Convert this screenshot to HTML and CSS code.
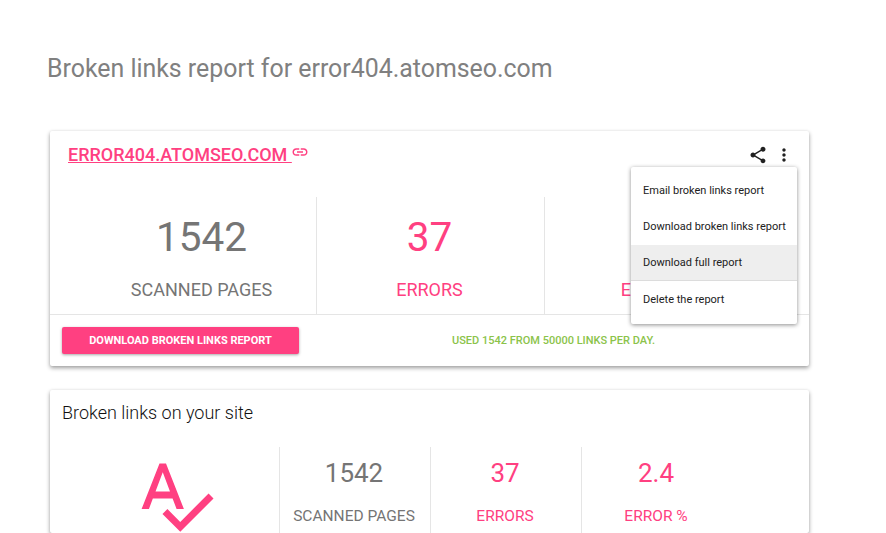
FILE: index.html
```html
<!DOCTYPE html>
<html lang="en">
<head>
    <meta charset="UTF-8">
    <meta name="viewport" content="width=device-width, initial-scale=1.0">
    <title>Broken links report</title>
    <link rel="stylesheet" href="styles.css">
</head>
<body>
    <h1 class="page-title">Broken links report for error404.atomseo.com</h1>

    <div class="card report-card">
        <div class="report-head">
            <a class="site-link" href="#">ERROR404.ATOMSEO.COM </a>
            <svg class="link-icon" viewBox="0 0 24 24"><path d="M3.9 12c0-1.71 1.39-3.1 3.1-3.1h4V7H7c-2.76 0-5 2.24-5 5s2.24 5 5 5h4v-1.9H7c-1.71 0-3.1-1.39-3.1-3.1zM8 13h8v-2H8v2zm9-6h-4v1.9h4c1.71 0 3.1 1.39 3.1 3.1s-1.39 3.1-3.1 3.1h-4V17h4c2.76 0 5-2.24 5-5s-2.24-5-5-5z"/></svg>
            <div class="head-actions">
                <svg class="action-icon" viewBox="0 0 24 24"><path d="M18 16.08c-.76 0-1.44.3-1.96.77L8.91 12.7c.05-.23.09-.46.09-.7s-.04-.47-.09-.7l7.05-4.11c.54.5 1.25.81 2.04.81 1.66 0 3-1.34 3-3s-1.34-3-3-3-3 1.34-3 3c0 .24.04.47.09.7L8.04 9.81C7.5 9.31 6.79 9 6 9c-1.66 0-3 1.34-3 3s1.34 3 3 3c.79 0 1.5-.31 2.04-.81l7.12 4.16c-.05.21-.08.43-.08.65 0 1.61 1.31 2.92 2.92 2.92s2.92-1.31 2.92-2.92-1.31-2.92-2.92-2.92z"/></svg>
                <svg class="action-icon" viewBox="0 0 24 24"><path d="M12 8c1.1 0 2-.9 2-2s-.9-2-2-2-2 .9-2 2 .9 2 2 2zm0 2c-1.1 0-2 .9-2 2s.9 2 2 2 2-.9 2-2-.9-2-2-2zm0 6c-1.1 0-2 .9-2 2s.9 2 2 2 2-.9 2-2-.9-2-2-2z"/></svg>
            </div>
        </div>

        <div class="big-stats">
            <div class="big-stat">
                <div class="big-num">1542</div>
                <div class="big-label">SCANNED PAGES</div>
            </div>
            <div class="big-stat pink">
                <div class="big-num">37</div>
                <div class="big-label">ERRORS</div>
            </div>
            <div class="big-stat pink">
                <div class="big-num">2.4</div>
                <div class="big-label">ERROR %</div>
            </div>
        </div>

        <div class="report-foot">
            <button class="download-btn" type="button">DOWNLOAD BROKEN LINKS REPORT</button>
            <div class="usage">USED 1542 FROM 50000 LINKS PER DAY.</div>
        </div>

        <ul class="menu">
            <li>Email broken links report</li>
            <li>Download broken links report</li>
            <li class="active">Download full report</li>
            <li>Delete the report</li>
        </ul>
    </div>

    <div class="card links-card">
        <h2 class="card-title">Broken links on your site</h2>
        <div class="small-stats">
            <div class="spell-box">
                <svg class="spell-icon" viewBox="0 0 24 24"><path d="M12.45 16h2.09L9.43 3H7.57L2.46 16h2.09l1.12-3h5.64l1.14 3zm-6.02-5L8.5 5.48 10.57 11H6.43zm15.16.59l-8.09 8.09L9.83 16l-1.41 1.41 5.09 5.09L23 13l-1.41-1.41z"/></svg>
            </div>
            <div class="small-stat">
                <div class="small-num">1542</div>
                <div class="small-label">SCANNED PAGES</div>
            </div>
            <div class="small-stat pink">
                <div class="small-num">37</div>
                <div class="small-label">ERRORS</div>
            </div>
            <div class="small-stat pink">
                <div class="small-num">2.4</div>
                <div class="small-label">ERROR %</div>
            </div>
        </div>
    </div>
</body>
</html>
```

FILE: styles.css
```css
html, body {
    height: 533px;
    overflow: hidden;
}
body {
    margin: 0;
    padding: 0 77px 0 50px;
    font-family: Roboto, Arial, sans-serif;
    background-color: white;
}
.page-title {
    margin: 0 0 0 -3px;
    padding-top: 53px;
    height: 78px;
    font-size: 24.9px;
    line-height: 32px;
    font-weight: 400;
    color: #808080;
}
.card {
    background-color: white;
    border-radius: 2px;
    box-shadow: 0 2px 4px rgba(0, 0, 0, 0.38), 0 0 3px rgba(0, 0, 0, 0.05);
}
.report-card {
    position: relative;
    height: 235px;
}
.report-head {
    display: flex;
    align-items: flex-start;
    height: 66px;
    padding: 12px 15px 0 18px;
    box-sizing: border-box;
}
.site-link {
    font-size: 18px;
    line-height: 24px;
    font-weight: 500;
    color: #ff4081;
    white-space: pre;
}
.link-icon {
    width: 18px;
    height: 18px;
    margin-left: -0.5px;
    fill: #ff4081;
}
.head-actions {
    display: flex;
    gap: 6px;
    margin: 2px 0 0 auto;
}
.action-icon {
    width: 20px;
    height: 20px;
    fill: #212121;
}
.big-stats {
    display: flex;
    height: 117px;
    padding-left: 39px;
    border-bottom: 1px solid #e5e5e5;
}
.big-stat {
    width: 228px;
    box-sizing: border-box;
    padding-right: 2px;
    border-right: 1px solid #e5e5e5;
    text-align: center;
    color: #757575;
}
.big-num {
    padding-top: 12px;
    font-size: 40.5px;
    line-height: 56px;
}
.big-label {
    margin-top: 13px;
    font-size: 18px;
    line-height: 24px;
}
.report-foot {
    display: flex;
    align-items: center;
    height: 51px;
    padding-left: 12px;
}
.download-btn {
    width: 237px;
    height: 27px;
    border: none;
    border-radius: 2px;
    background-color: #ff4081;
    color: white;
    font-family: inherit;
    font-size: 11px;
    font-weight: 700;
    box-shadow: 0 1px 3px rgba(0, 0, 0, 0.35);
}
.usage {
    margin-left: 153px;
    font-size: 11px;
    font-weight: 500;
    color: #8bc34a;
}
.menu {
    position: absolute;
    top: 36px;
    left: 581px;
    width: 166px;
    margin: 0;
    padding: 6px 0 7px;
    list-style: none;
    background-color: white;
    border-radius: 2px;
    box-shadow: 0 1px 4px rgba(0, 0, 0, 0.45);
    font-size: 11px;
    color: #212121;
}
.menu li {
    height: 36px;
    padding-left: 12px;
    line-height: 36px;
    white-space: nowrap;
}
.menu .active {
    box-sizing: border-box;
    background-color: #eeeeee;
    border-bottom: 1px solid #dcdcdc;
}
.menu .active + li {
    line-height: 38px;
}
.links-card {
    margin-top: 24px;
    height: 143px;
    overflow: hidden;
}
.card-title {
    margin: 0;
    padding: 11px 12px 0;
    height: 46px;
    box-sizing: border-box;
    font-size: 18px;
    line-height: 24px;
    font-weight: 300;
    color: #111111;
}
.small-stats {
    display: flex;
    padding-top: 11px;
    height: 86px;
}
.spell-box {
    width: 230px;
    height: 100px;
    border-right: 1px solid #e5e5e5;
    box-sizing: border-box;
    padding: 6px 0 0 83px;
}
.spell-icon {
    display: block;
    width: 84px;
    height: 84px;
    fill: #ff4081;
}
.small-stat {
    width: 151px;
    height: 100px;
    box-sizing: border-box;
    padding-right: 2px;
    border-right: 1px solid #e5e5e5;
    text-align: center;
    color: #757575;
}
.small-stat:last-child {
    padding-right: 3px;
    border-right: none;
}
.small-num {
    padding-top: 9px;
    font-size: 26px;
    line-height: 34px;
}
.small-label {
    margin-top: 16px;
    font-size: 15.5px;
    line-height: 20px;
}
.big-stat.pink, .small-stat.pink {
    color: #ff4081;
}
```
